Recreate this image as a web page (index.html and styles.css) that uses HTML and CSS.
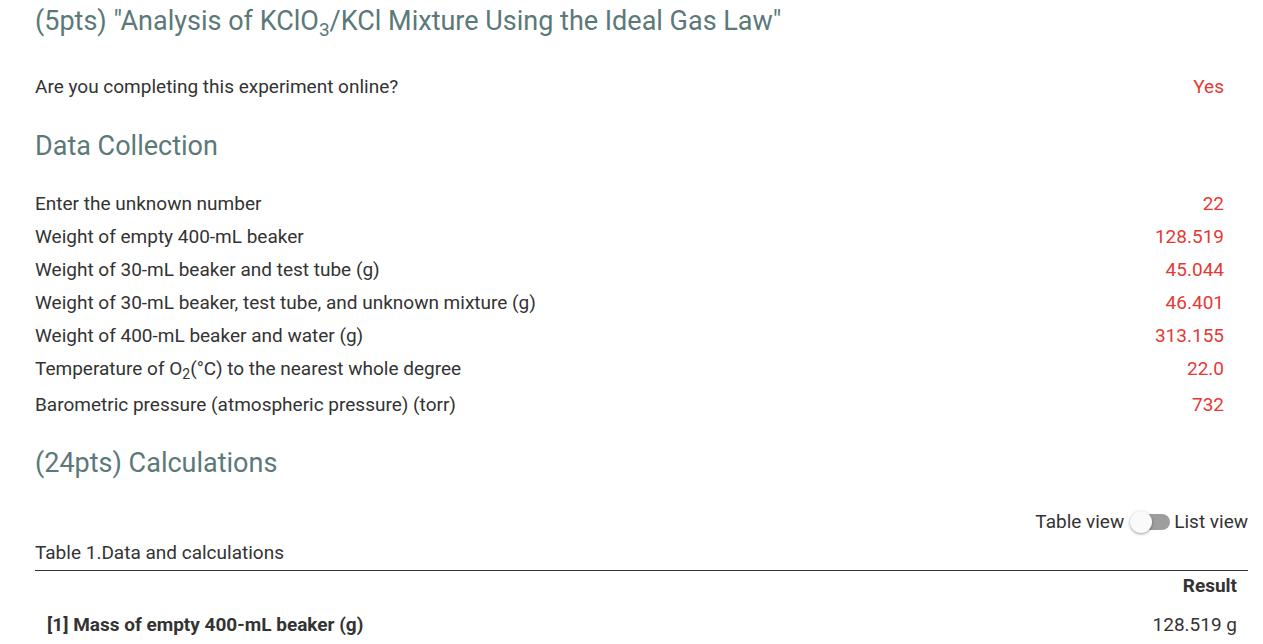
FILE: index.html
```html
<!DOCTYPE html>
<html>
<head>
<meta charset="utf-8">
<link rel="stylesheet" href="styles.css">
</head>
<body>
<div class="page">
  <h1 class="title">(5pts) "Analysis of KClO<sub>3</sub>/KCl Mixture Using the Ideal Gas Law"</h1>
  <div class="row first">
    <span class="label">Are you completing this experiment online?</span>
    <span class="value">Yes</span>
  </div>
  <h2 class="section">Data Collection</h2>
  <div class="rows">
    <div class="row"><span class="label">Enter the unknown number</span><span class="value">22</span></div>
    <div class="row"><span class="label">Weight of empty 400-mL beaker</span><span class="value">128.519</span></div>
    <div class="row"><span class="label">Weight of 30-mL beaker and test tube (g)</span><span class="value">45.044</span></div>
    <div class="row"><span class="label">Weight of 30-mL beaker, test tube, and unknown mixture (g)</span><span class="value">46.401</span></div>
    <div class="row"><span class="label">Weight of 400-mL beaker and water (g)</span><span class="value">313.155</span></div>
    <div class="row"><span class="label">Temperature of O<sub>2</sub>(°C) to the nearest whole degree</span><span class="value">22.0</span></div>
    <div class="row"><span class="label">Barometric pressure (atmospheric pressure) (torr)</span><span class="value">732</span></div>
  </div>
  <h2 class="section calc">(24pts) Calculations</h2>
  <div class="toggle-bar">
    <span>Table view</span>
    <span class="switch"><span class="track"></span><span class="knob"></span></span>
    <span>List view</span>
  </div>
  <div class="caption">Table 1.Data and calculations</div>
  <div class="table">
    <div class="thead"><span>Result</span></div>
    <div class="trow"><span class="tlabel">[1] Mass of empty 400-mL beaker (g)</span><span class="tval">128.519 g</span></div>
  </div>
</div>
</body>
</html>
```
FILE: styles.css
```css
html, body {
  margin: 0;
  padding: 0;
  background: #ffffff;
}
body {
  font-family: Roboto, "Liberation Sans", Arial, sans-serif;
  color: #333333;
}
.page {
  padding: 0 15px 0 35px;
}
.title {
  margin: 0;
  padding-top: 2px;
  font-size: 27px;
  font-weight: 400;
  color: #5b7979;
  line-height: 38px;
}
.title sub {
  font-size: 19px;
  vertical-align: -6px;
  line-height: 0;
}
.row {
  display: flex;
  justify-content: space-between;
  align-items: center;
  font-size: 19px;
  line-height: 33px;
  padding-right: 24px;
}
.row.first {
  margin-top: 30px;
}
.row sub {
  font-size: 14px;
  vertical-align: -4px;
  line-height: 0;
}
.value {
  color: #e53935;
}
.section {
  margin: 0;
  font-size: 27px;
  font-weight: 400;
  color: #5b7979;
  line-height: 36px;
  margin-top: 25px;
  margin-bottom: 23px;
}
.section.calc {
  margin-top: 24px;
  margin-bottom: 29px;
}
.rows .row:last-child {
  margin-top: 3px;
}
.toggle-bar {
  display: flex;
  justify-content: flex-end;
  align-items: center;
  font-size: 19px;
  line-height: 24px;
  gap: 4px;
}
.switch {
  position: relative;
  width: 42px;
  height: 24px;
  display: inline-block;
}
.track {
  position: absolute;
  left: 6px;
  top: 4px;
  width: 36px;
  height: 16px;
  border-radius: 8px;
  background: #9e9e9e;
}
.knob {
  position: absolute;
  left: 2px;
  top: 1px;
  width: 22px;
  height: 22px;
  border-radius: 50%;
  background: #fafafa;
  box-shadow: 0 1px 3px rgba(0,0,0,0.4);
}
.caption {
  font-size: 19px;
  line-height: 24px;
  margin-top: 7px;
  padding-bottom: 5px;
  border-bottom: 1px solid #333333;
}
.thead {
  display: flex;
  justify-content: flex-end;
  font-size: 19px;
  font-weight: 700;
  line-height: 28px;
  padding-right: 11px;
  padding-top: 1px;
}
.trow {
  display: flex;
  justify-content: space-between;
  font-size: 19px;
  line-height: 28px;
  padding: 11px 11px 0 12px;
}
.tlabel {
  font-weight: 700;
}
```
